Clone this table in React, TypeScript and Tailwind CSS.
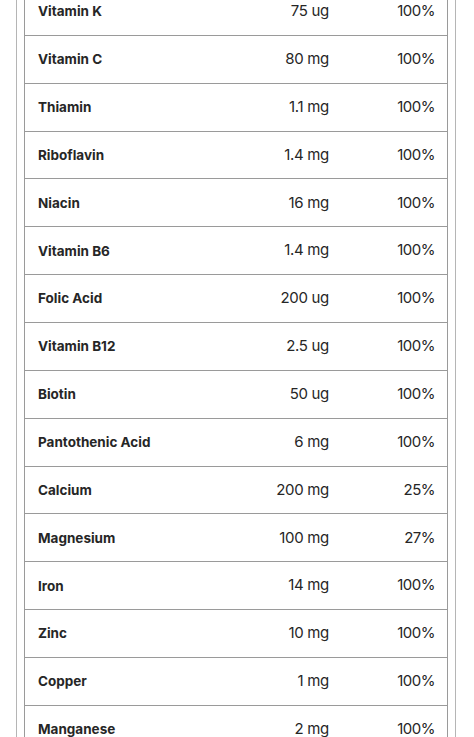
const rows: [string, string, string][] = [
  ["Vitamin K", "75 ug", "100%"],
  ["Vitamin C", "80 mg", "100%"],
  ["Thiamin", "1.1 mg", "100%"],
  ["Riboflavin", "1.4 mg", "100%"],
  ["Niacin", "16 mg", "100%"],
  ["Vitamin B6", "1.4 mg", "100%"],
  ["Folic Acid", "200 ug", "100%"],
  ["Vitamin B12", "2.5 ug", "100%"],
  ["Biotin", "50 ug", "100%"],
  ["Pantothenic Acid", "6 mg", "100%"],
  ["Calcium", "200 mg", "25%"],
  ["Magnesium", "100 mg", "27%"],
  ["Iron", "14 mg", "100%"],
  ["Zinc", "10 mg", "100%"],
  ["Copper", "1 mg", "100%"],
  ["Manganese", "2 mg", "100%"],
  ["Selenium", "55 ug", "100%"],
]

export default function App() {
  return (
    <div className="h-[737px] overflow-hidden bg-white font-['Inter',sans-serif] text-[#262626]">
      <div className="ml-4 mr-[18px] mt-[-12px] border-x border-[#b5b5b5] px-[7px]">
        <div className="border-x border-[#9a9a9a]">
          {rows.map(([name, amount, dv]) => (
            <div
              key={name}
              className="grid h-[47.86px] grid-cols-[1fr_110px_106px] items-center border-b border-[#9a9a9a] pl-[13px] pr-[12px]"
            >
              <span className="text-[13.5px] font-bold">{name}</span>
              <span className="text-right text-[15px] tracking-[-0.3px]">{amount}</span>
              <span className="text-right text-[15px] tracking-[-0.5px]">{dv}</span>
            </div>
          ))}
        </div>
      </div>
    </div>
  )
}
